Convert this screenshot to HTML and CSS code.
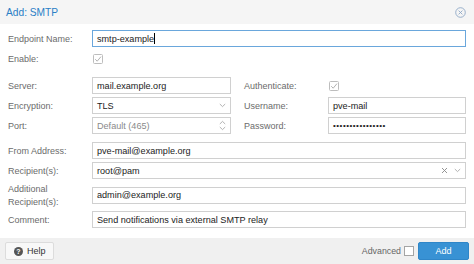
FILE: index.html
```html
<!DOCTYPE html>
<html>
  <head>
    <meta charset="utf-8">
    <title>Add: SMTP</title>
    <link rel="stylesheet" href="styles.css">
  </head>
  <body>
    <div class="win">
      <div class="head">
        <span class="title">Add: SMTP</span>
        <svg class="close" width="11" height="11" viewBox="0 0 11 11">
          <circle cx="5.5" cy="5.5" r="4.8" fill="none" stroke="#8ea8c6" stroke-width="0.9"/>
          <path d="M3.6 3.6 L7.4 7.4 M7.4 3.6 L3.6 7.4" stroke="#8ea8c6" stroke-width="0.9"/>
        </svg>
      </div>

      <div class="body">
        <div class="row">
          <label class="lbl">Endpoint Name:</label>
          <div class="field focus"><span>smtp-example</span><span class="caret"></span></div>
        </div>
        <div class="row spacer">
          <label class="lbl">Enable:</label>
          <svg class="check" width="10" height="10" viewBox="0 0 10 10">
            <rect x="0.5" y="0.5" width="9" height="9" rx="1" fill="#fff" stroke="#bdbdbd"/>
            <path d="M2.2 5.2 L4.2 7.2 L8 2.6" fill="none" stroke="#a9a9a9" stroke-width="0.9"/>
          </svg>
        </div>

        <div class="cols">
          <div class="col">
            <div class="row">
              <label class="lbl">Server:</label>
              <div class="field"><span>mail.example.org</span></div>
            </div>
            <div class="row">
              <label class="lbl">Encryption:</label>
              <div class="field">
                <span>TLS</span>
                <svg class="trig" width="7" height="5" viewBox="0 0 7 5"><path d="M0.8 1 L3.5 3.6 L6.2 1" fill="none" stroke="#a0a0a0" stroke-width="0.8"/></svg>
              </div>
            </div>
            <div class="row">
              <label class="lbl">Port:</label>
              <div class="field">
                <span class="ph">Default (465)</span>
                <svg class="trig" width="7" height="11" viewBox="0 0 7 11"><path d="M0.8 4 L3.5 1.4 L6.2 4 M0.8 7 L3.5 9.6 L6.2 7" fill="none" stroke="#a0a0a0" stroke-width="0.8"/></svg>
              </div>
            </div>
          </div>
          <div class="col">
            <div class="row">
              <label class="lbl">Authenticate:</label>
              <svg class="check" width="10" height="10" viewBox="0 0 10 10">
                <rect x="0.5" y="0.5" width="9" height="9" rx="1" fill="#fff" stroke="#bdbdbd"/>
                <path d="M2.2 5.2 L4.2 7.2 L8 2.6" fill="none" stroke="#a9a9a9" stroke-width="0.9"/>
              </svg>
            </div>
            <div class="row">
              <label class="lbl">Username:</label>
              <div class="field"><span>pve-mail</span></div>
            </div>
            <div class="row">
              <label class="lbl">Password:</label>
              <div class="field"><span class="dots">&bull;&bull;&bull;&bull;&bull;&bull;&bull;&bull;&bull;&bull;&bull;&bull;&bull;&bull;&bull;&bull;</span></div>
            </div>
          </div>
        </div>

        <div class="row">
          <label class="lbl">From Address:</label>
          <div class="field"><span>pve-mail@example.org</span></div>
        </div>
        <div class="row">
          <label class="lbl">Recipient(s):</label>
          <div class="field">
            <span>root@pam</span>
            <svg class="clear" width="7" height="7" viewBox="0 0 7 7"><path d="M1 1 L6 6 M6 1 L1 6" stroke="#8a8a8a" stroke-width="0.9"/></svg>
            <svg class="trig" width="7" height="5" viewBox="0 0 7 5"><path d="M0.8 1 L3.5 3.6 L6.2 1" fill="none" stroke="#a0a0a0" stroke-width="0.8"/></svg>
          </div>
        </div>
        <div class="row tall">
          <label class="lbl">Additional<br>Recipient(s):</label>
          <div class="field"><span>admin@example.org</span></div>
        </div>
        <div class="row">
          <label class="lbl">Comment:</label>
          <div class="field"><span>Send notifications via external SMTP relay</span></div>
        </div>
      </div>

      <div class="foot">
        <div class="btn help">
          <span class="qicon">?</span>
          <span>Help</span>
        </div>
        <div class="adv">
          <span>Advanced</span>
          <span class="box"></span>
        </div>
        <div class="btn add">Add</div>
      </div>
    </div>
  </body>
</html>
```

FILE: styles.css
```css
* {
    box-sizing: border-box ;
}
body {
    margin: 0 ;
    background-color: #fff ;
    font-family: "Liberation Sans", Arial, sans-serif ;
}
.win {
    width: 474px ;
    height: 264px ;
    overflow: hidden ;
    display: flex ;
    flex-direction: column ;
}
.head {
    height: 24px ;
    flex: none ;
    background-color: #f5f5f5 ;
    display: flex ;
    align-items: center ;
    justify-content: space-between ;
    padding: 0 8px 0 6px ;
}
.title {
    color: #2a7fc6 ;
    font-size: 10.2px ;
}
.body {
    flex: 1 ;
    padding: 6px 8px 0 8px ;
}
.row {
    display: flex ;
    align-items: center ;
    height: 17px ;
    margin-bottom: 3px ;
}
.row.spacer {
    margin-bottom: 10px ;
}
.row.tall {
    height: 26px ;
}
.lbl {
    width: 84px ;
    flex: none ;
    color: #6b6b6b ;
    font-size: 9px ;
    line-height: 13px ;
    padding-top: 2px ;
}
.field {
    flex: 1 ;
    height: 17px ;
    border: 1px solid #d0d0d0 ;
    background-color: #fff ;
    display: flex ;
    align-items: center ;
    padding: 0 4px ;
    color: #222 ;
    font-size: 9.1px ;
    white-space: nowrap ;
    overflow: hidden ;
}
.field > span:first-child {
    flex: 1 ;
}
.field.focus > span:first-child {
    flex: none ;
}
.field.focus {
    border-color: #6aa7dc ;
}
.caret {
    width: 1px ;
    height: 11px ;
    background-color: #000 ;
}
.ph {
    color: #8a8a8a ;
}
.dots {
    font-size: 8px ;
    letter-spacing: 0.5px ;
}
.trig {
    flex: none ;
    margin-left: 6px ;
}
.clear {
    flex: none ;
}
.check {
    margin-left: 1px ;
}
.cols {
    display: grid ;
    grid-template-columns: 223px 222px ;
    column-gap: 13px ;
    margin-bottom: 5px ;
}
.foot {
    height: 26px ;
    flex: none ;
    background-color: #f0f0f0 ;
    display: flex ;
    align-items: center ;
    padding: 0 5px ;
}
.btn {
    height: 18px ;
    display: flex ;
    align-items: center ;
    font-size: 9px ;
    border-radius: 2px ;
}
.help {
    width: 49px ;
    background-color: #f8f8f8 ;
    border: 1px solid #dcdcdc ;
    color: #333 ;
    padding-left: 8px ;
}
.qicon {
    width: 9px ;
    height: 9px ;
    border-radius: 50% ;
    background-color: #555 ;
    color: #fff ;
    font-size: 7px ;
    font-weight: bold ;
    display: flex ;
    align-items: center ;
    justify-content: center ;
    margin-right: 4px ;
}
.adv {
    margin-left: auto ;
    display: flex ;
    align-items: center ;
    color: #666 ;
    font-size: 8.8px ;
    margin-right: 4px ;
}
.box {
    width: 10px ;
    height: 10px ;
    border: 1px solid #a5a5a5 ;
    background-color: #fff ;
    margin-left: 3px ;
}
.add {
    width: 51px ;
    justify-content: center ;
    background-color: #3892d4 ;
    border: 1px solid #2f86c8 ;
    color: #fff ;
}
```
